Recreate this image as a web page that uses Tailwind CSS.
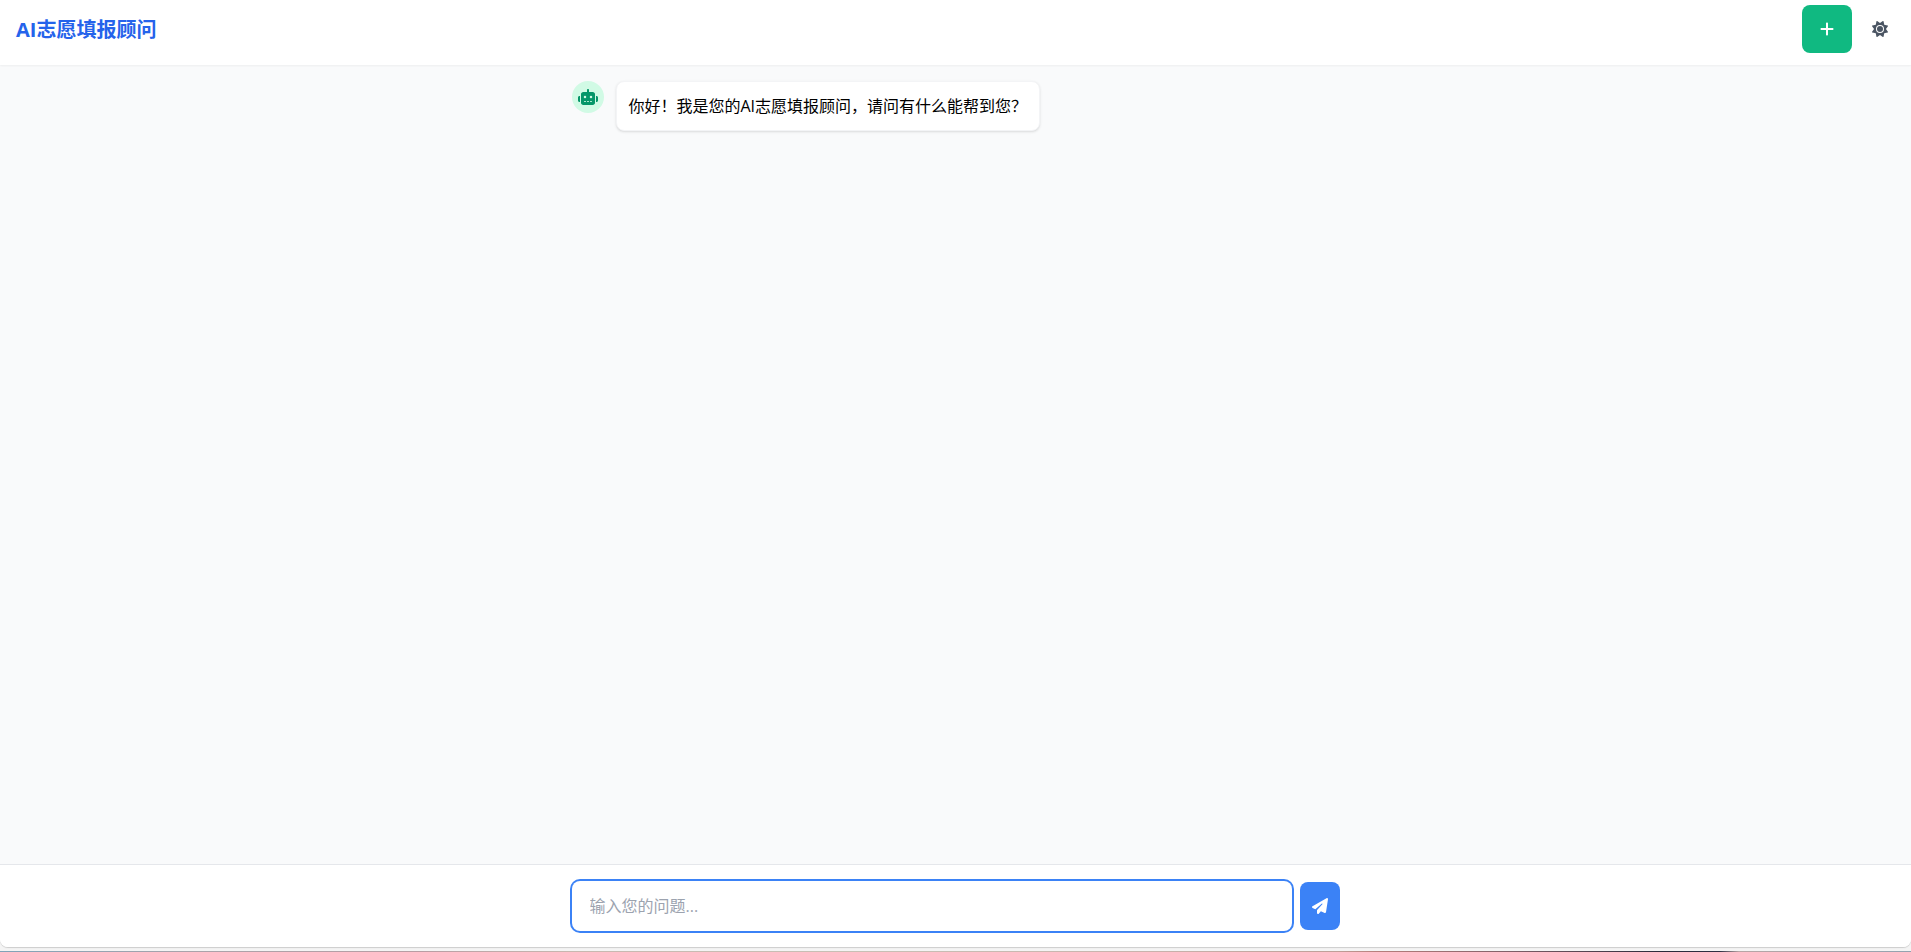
<!DOCTYPE html>
<html lang="zh-CN">
<head>
    <meta charset="UTF-8">
    <meta name="viewport" content="width=device-width, initial-scale=1.0">
    <title>AI志愿填报顾问</title>
    <script src="https://cdn.jsdelivr.net/npm/@tailwindcss/browser@4"></script>
</head>
<body class="h-screen flex flex-col overflow-hidden bg-[#f4f4f4] font-['Open_Sans','Noto_Sans_CJK_SC',sans-serif] text-base text-black">
    <div class="flex-1 min-h-0 flex flex-col overflow-hidden rounded-b-lg bg-white shadow-[0_1px_1px_#cccccc]">
        <!-- Header -->
        <header class="flex items-center justify-between pl-4 pr-[15px] pt-[5px] pb-3 bg-white shadow-[0_1px_2px_rgba(0,0,0,0.05)] z-10">
            <h1 class="pt-0.5 text-xl font-bold text-[#2563eb]">AI志愿填报顾问</h1>
            <div class="flex items-center gap-3">
                <button id="new-chat" type="button" aria-label="新对话" class="w-[50px] h-12 flex items-center justify-center rounded-lg bg-[#10b981] text-white cursor-pointer">
                    <svg class="w-4 h-4" viewBox="0 0 448 512" fill="currentColor">
                        <path d="M256 80c0-17.7-14.3-32-32-32s-32 14.3-32 32V224H48c-17.7 0-32 14.3-32 32s14.3 32 32 32H192V432c0 17.7 14.3 32 32 32s32-14.3 32-32V288H400c17.7 0 32-14.3 32-32s-14.3-32-32-32H256V80z"/>
                    </svg>
                </button>
                <button id="settings" type="button" aria-label="设置" class="p-2 text-[#4b5563] cursor-pointer">
                    <svg class="w-4 h-4" viewBox="0 0 512 512" fill="currentColor">
                        <path d="M361.5 1.2c5 2.1 8.6 6.6 9.6 11.900L391 121l107.900 19.800c5.300 1 9.800 4.600 11.900 9.600s1.500 10.700-1.600 15.200L446.900 256l62.300 90.300c3.100 4.500 3.700 10.200 1.600 15.200s-6.600 8.600-11.900 9.600L391 391 371.100 498.900c-1 5.300-4.600 9.800-9.600 11.900s-10.700 1.500-15.200-1.600L256 446.900l-90.300 62.300c-4.500 3.100-10.200 3.700-15.200 1.600s-8.600-6.600-9.600-11.900L121 391 13.100 371.100c-5.300-1-9.800-4.600-11.900-9.600s-1.500-10.700 1.600-15.200L65.100 256 2.800 165.700c-3.100-4.500-3.700-10.200-1.600-15.200s6.600-8.600 11.900-9.600L121 121 140.900 13.100c1-5.300 4.600-9.800 9.600-11.900s10.700-1.500 15.200 1.600L256 65.100 346.300 2.800c4.500-3.100 10.200-3.700 15.200-1.600zM160 256a96 96 0 1 1 192 0 96 96 0 1 1-192 0zm224 0a128 128 0 1 0-256 0 128 128 0 1 0 256 0z"/>
                    </svg>
                </button>
            </div>
        </header>

        <!-- Messages -->
        <main id="chat" class="flex-1 min-h-0 overflow-y-auto p-4 bg-[#f9fafb]">
            <div class="max-w-3xl mx-auto flex items-start gap-3">
                <div class="w-8 h-8 shrink-0 flex items-center justify-center rounded-full bg-[#d1fae5] text-[#059669]">
                    <svg class="w-5 h-4" viewBox="0 0 640 512" fill="currentColor">
                        <path d="M320 0c17.7 0 32 14.3 32 32V96H472c39.8 0 72 32.2 72 72V440c0 39.8-32.2 72-72 72H168c-39.8 0-72-32.2-72-72V168c0-39.8 32.2-72 72-72H288V32c0-17.7 14.3-32 32-32zM208 384c-8.8 0-16 7.2-16 16s7.2 16 16 16h32c8.8 0 16-7.2 16-16s-7.2-16-16-16H208zm96 0c-8.8 0-16 7.2-16 16s7.2 16 16 16h32c8.8 0 16-7.2 16-16s-7.2-16-16-16H304zm96 0c-8.8 0-16 7.2-16 16s7.2 16 16 16h32c8.8 0 16-7.2 16-16s-7.2-16-16-16H400zM264 256a40 40 0 1 0-80 0 40 40 0 1 0 80 0zm152 40a40 40 0 1 0 0-80 40 40 0 1 0 0 80zM48 224H64V416H48c-26.5 0-48-21.5-48-48V272c0-26.5 21.5-48 48-48zm544 0c26.5 0 48 21.5 48 48v96c0 26.5-21.5 48-48 48H576V224h16z"/>
                    </svg>
                </div>
                <div class="p-3 rounded-lg bg-white border border-[#f3f4f6] shadow-sm">
                    <p class="leading-6">你好！我是您的AI志愿填报顾问，请问有什么能帮到您？</p>
                </div>
            </div>
        </main>

        <!-- Input area -->
        <footer class="p-4 bg-white border-t border-[#e5e7eb]">
            <form id="chat-form" class="max-w-3xl mx-auto flex items-center gap-2">
                <input type="text" id="question" aria-label="您的问题" placeholder="输入您的问题..." autocomplete="off"
                       class="flex-1 h-[50px] px-[18px] rounded-lg bg-white ring-2 ring-[#3b82f6] placeholder-[#9ca3af] outline-none">
                <button type="submit" aria-label="发送" class="w-10 h-12 flex items-center justify-center rounded-lg bg-[#3b82f6] text-white cursor-pointer">
                    <svg class="w-4 h-4" viewBox="0 0 512 512" fill="currentColor">
                        <path d="M498.1 5.6c10.1 7 15.4 19.1 13.5 31.2l-64 416c-1.5 9.7-7.4 18.2-16 23s-18.9 5.4-28 1.6L284 427.7l-68.5 74.1c-8.9 9.7-22.9 12.9-35.2 8.1S160 493.2 160 480V396.400c0-4 1.500-7.800 4.200-10.700L331.800 202.800c5.800-6.300 5.600-16-.4-22s-15.700-6.400-22-.7L106 360.800 17.700 316.600C7.100 311.300 .3 300.700 0 288.900s5.900-22.800 16.100-28.700l448-256c10.700-6.100 23.900-5.500 34 1.400z"/>
                    </svg>
                </button>
            </form>
        </footer>
    </div>
    <!-- Window edge -->
    <div class="h-1"></div>
    <div class="h-px bg-[linear-gradient(to_right,#7fa3b8_0%,#aaa3aa_10%,#b89da3_22%,#c8b8b0_30%,#c8c0b5_45%,#c9b3ad_60%,#bf9f98_70%,#b87f7c_72%,#7f6068_79%,#2a2a3a_87%,#2f2f42_90%,#b8a5a5_91%,#93a3b0_100%)]"></div>
</body>
</html>
